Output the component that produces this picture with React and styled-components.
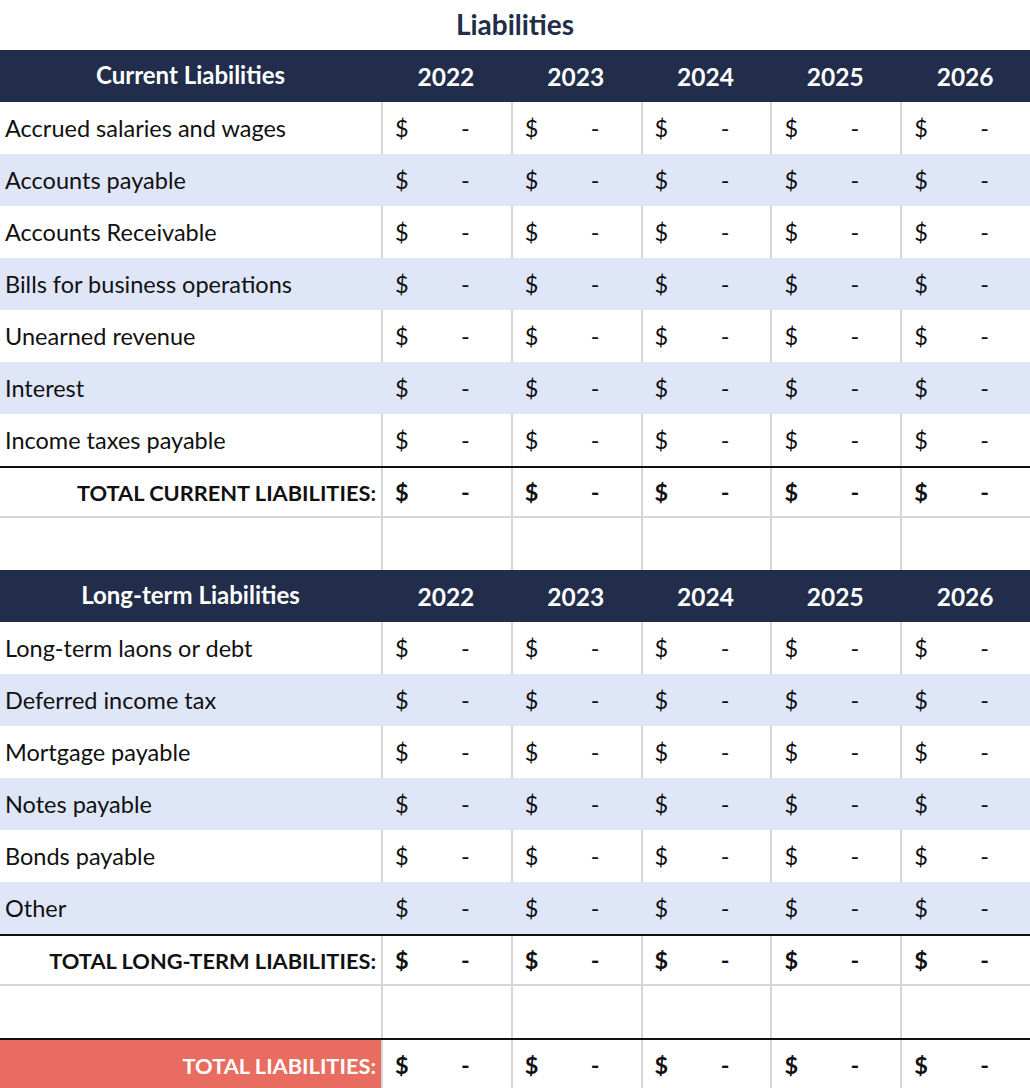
import React from "react";
import styled, { createGlobalStyle } from "styled-components";

const GlobalStyle = createGlobalStyle`
  html, body {
    margin: 0;
    padding: 0;
    background: #fff;
    font-family: Lato, "Open Sans", sans-serif;
  }
`;

const Page = styled.div`
  width: 1030px;
`;

const Title = styled.h1`
  height: 50px;
  margin: 0;
  display: flex;
  align-items: center;
  justify-content: center;
  font-size: 28px;
  font-weight: 700;
  color: #212d4a;
  padding-bottom: 2px;
  box-sizing: border-box;
`;

const Row = styled.div`
  display: grid;
  grid-template-columns: 381px repeat(5, 1fr);
  height: 52px;
  box-sizing: border-box;
  background: ${({ $tone }) =>
    $tone === "head" ? "#212d4a" : $tone === "blue" ? "#dfe6f8" : "#fff"};
  border-top: ${({ $rule }) => ($rule ? "2px solid #111" : "none")};
  border-bottom: ${({ $gridBottom }) => ($gridBottom ? "2px solid #d6d6d6" : "none")};
`;

const Label = styled.div`
  display: flex;
  align-items: center;
  padding: 0 5px;
  font-size: 23.5px;
  color: #111;
  white-space: nowrap;
  justify-content: ${({ $align }) => $align || "flex-start"};
  font-weight: ${({ $bold }) => ($bold ? 700 : 400)};
  ${({ $total }) => $total && "font-size: 21.8px; text-transform: uppercase;"}
  ${({ $coral }) => $coral && "background: #e96c60; color: #fff;"}
`;

const HeadLabel = styled.div`
  display: flex;
  align-items: center;
  justify-content: center;
  color: #fff;
  font-weight: 700;
  font-size: 24px;
  padding-bottom: 3px;
`;

const Year = styled.div`
  display: flex;
  align-items: center;
  justify-content: center;
  color: #fff;
  font-weight: 700;
  font-size: 24.5px;
`;

const Money = styled.div`
  display: flex;
  align-items: center;
  justify-content: space-between;
  padding: 0 41px 0 12px;
  font-size: 23.5px;
  color: #111;
  font-weight: ${({ $bold }) => ($bold ? 700 : 400)};
  border-left: ${({ $grid }) => ($grid ? "2px solid #d6d6d6" : "2px solid transparent")};
`;

const Blank = styled.div`
  border-left: ${({ $first }) => ($first ? "none" : "2px solid #d6d6d6")};
`;

const years = ["2022", "2023", "2024", "2025", "2026"];

const current = [
  "Accrued salaries and wages",
  "Accounts payable",
  "Accounts Receivable",
  "Bills for business operations",
  "Unearned revenue",
  "Interest",
  "Income taxes payable",
];

const longTerm = [
  "Long-term laons or debt",
  "Deferred income tax",
  "Mortgage payable",
  "Notes payable",
  "Bonds payable",
  "Other",
];

function HeaderRow({ title }) {
  return (
    <Row $tone="head">
      <HeadLabel>{title}</HeadLabel>
      {years.map((y) => (
        <Year key={y}>{y}</Year>
      ))}
    </Row>
  );
}

function Values({ bold, grid }) {
  return years.map((y) => (
    <Money key={y} $bold={bold} $grid={grid}>
      <span>$</span>
      <span>-</span>
    </Money>
  ));
}

function ItemRows({ items }) {
  return items.map((name, i) => {
    const blue = i % 2 === 1;
    return (
      <Row key={name} $tone={blue ? "blue" : "white"}>
        <Label>{name}</Label>
        <Values grid={!blue} />
      </Row>
    );
  });
}

function TotalRow({ label, gridBottom }) {
  return (
    <Row $rule $gridBottom={gridBottom}>
      <Label $align="flex-end" $bold $total>
        {label}
      </Label>
      <Values bold grid />
    </Row>
  );
}

function BlankRow() {
  return (
    <Row>
      <Blank $first />
      {years.map((y) => (
        <Blank key={y} />
      ))}
    </Row>
  );
}

export default function App() {
  return (
    <Page>
      <GlobalStyle />
      <Title>Liabilities</Title>
      <HeaderRow title="Current Liabilities" />
      <ItemRows items={current} />
      <TotalRow label="TOTAL CURRENT LIABILITIES:" gridBottom />
      <BlankRow />
      <HeaderRow title="Long-term Liabilities" />
      <ItemRows items={longTerm} />
      <TotalRow label="TOTAL LONG-TERM LIABILITIES:" gridBottom />
      <BlankRow />
      <Row $rule>
        <Label $align="flex-end" $bold $total $coral>
          TOTAL LIABILITIES:
        </Label>
        <Values bold grid />
      </Row>
    </Page>
  );
}
